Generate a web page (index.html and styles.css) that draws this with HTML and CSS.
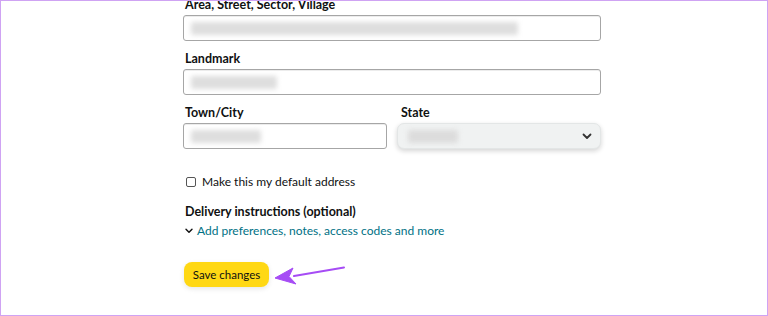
FILE: index.html
```html
<!DOCTYPE html>
<html>
<head>
<meta charset="utf-8">
<link rel="stylesheet" href="styles.css">
</head>
<body>
<div class="frame">
  <form class="form">
    <div class="field">
      <label class="label">Area, Street, Sector, Village</label>
      <div class="input"><span class="blur" style="width:327px"></span></div>
    </div>
    <div class="field">
      <label class="label">Landmark</label>
      <div class="input"><span class="blur" style="width:86px"></span></div>
    </div>
    <div class="row">
      <div class="field city">
        <label class="label">Town/City</label>
        <div class="input"><span class="blur" style="width:70px"></span></div>
      </div>
      <div class="field state">
        <label class="label">State</label>
        <div class="select"><span class="blur light" style="width:50px"></span>
          <svg class="chev" width="10" height="7" viewBox="0 0 10 7"><path d="M1.5 1.5 L5 5 L8.5 1.5" fill="none" stroke="#333" stroke-width="1.8" stroke-linecap="round" stroke-linejoin="round"/></svg>
        </div>
      </div>
    </div>
    <div class="check">
      <span class="box"></span>
      <span>Make this my default address</span>
    </div>
    <div class="delivery">Delivery instructions (optional)</div>
    <div class="link">
      <svg width="8" height="6" viewBox="0 0 8 6"><path d="M1 1.2 L4 4.3 L7 1.2" fill="none" stroke="#111" stroke-width="1.4" stroke-linecap="round" stroke-linejoin="round"/></svg>
      <span>Add preferences, notes, access codes and more</span>
    </div>
    <div class="actions">
      <button type="button" class="save">Save changes</button>
      <svg class="arrow" width="72" height="22" viewBox="0 0 72 22"><path d="M70 2.5 L20 11" stroke="#a64cf5" stroke-width="2" stroke-linecap="round"/><path d="M1 13 L19 3 L15 11.5 L22 19 Z" fill="#a64cf5" stroke="#a64cf5" stroke-width="1" stroke-linejoin="round"/></svg>
    </div>
  </form>
</div>
</body>
</html>
```
FILE: styles.css
```css
* { box-sizing: border-box; }
html, body { margin: 0; padding: 0; background: #fff; }
.frame {
  width: 768px;
  height: 316px;
  border: 1px solid #cfa3f3;
  overflow: hidden;
  font-family: Lato, "Noto Sans", sans-serif;
  color: #0f1111;
}
.form {
  width: 418px;
  margin: -5px 0 0 182px;
  display: flex;
  flex-direction: column;
}
.field { display: flex; flex-direction: column; margin-bottom: 9px; }
.label {
  font-size: 12.5px;
  font-weight: 700;
  line-height: 18px;
  height: 18px;
  margin: 0 0 1px 2px;
}
.input {
  height: 26px;
  border: 1px solid #a6a6a6;
  border-radius: 3px;
  box-shadow: inset 0 1px 0 rgba(15,17,17,.08);
  display: flex;
  align-items: center;
  padding-left: 7px;
  background: #fff;
}
.blur {
  display: block;
  height: 13px;
  background: #dedede;
  border-radius: 2px;
  filter: blur(2.5px);
}
.blur.light { background: #dcdcdc; }
.row { display: flex; gap: 10px; }
.city { width: 204px; }
.state { flex: 1; }
.state .label { margin-left: 4px; }
.select {
  height: 26px;
  border-radius: 7px;
  background: #f0f2f2;
  box-shadow: 0 2px 5px rgba(15,17,17,.18);
  border: 1px solid #e3e6e6;
  display: flex;
  align-items: center;
  justify-content: space-between;
  padding: 0 8px 0 10px;
}
.chev { display: block; }
.check {
  display: flex;
  align-items: center;
  gap: 6px;
  font-size: 12px;
  line-height: 16px;
  margin: 16px 0 0 3px;
}
.box {
  width: 10px;
  height: 10px;
  border: 1px solid #555;
  border-radius: 2px;
  background: #fff;
}
.delivery {
  font-size: 12.5px;
  font-weight: 700;
  line-height: 16px;
  margin: 14px 0 0 2px;
}
.link {
  display: flex;
  align-items: center;
  gap: 4px;
  font-size: 12px;
  line-height: 16px;
  color: #007185;
  margin: 3px 0 0 2px;
}
.link svg { display: block; }
.actions {
  display: flex;
  align-items: center;
  margin-top: 23px;
  gap: 5px;
}
.save {
  width: 85px;
  height: 25px;
  border: 0;
  border-radius: 8px;
  background: #ffd814;
  box-shadow: 0 2px 5px rgba(213,217,217,.6);
  font-family: Lato, "Noto Sans", sans-serif;
  font-size: 11.5px;
  color: #0f1111;
  padding: 0;
  margin-left: 1px;
}
.arrow { display: block; margin-top: 2px; }
```
